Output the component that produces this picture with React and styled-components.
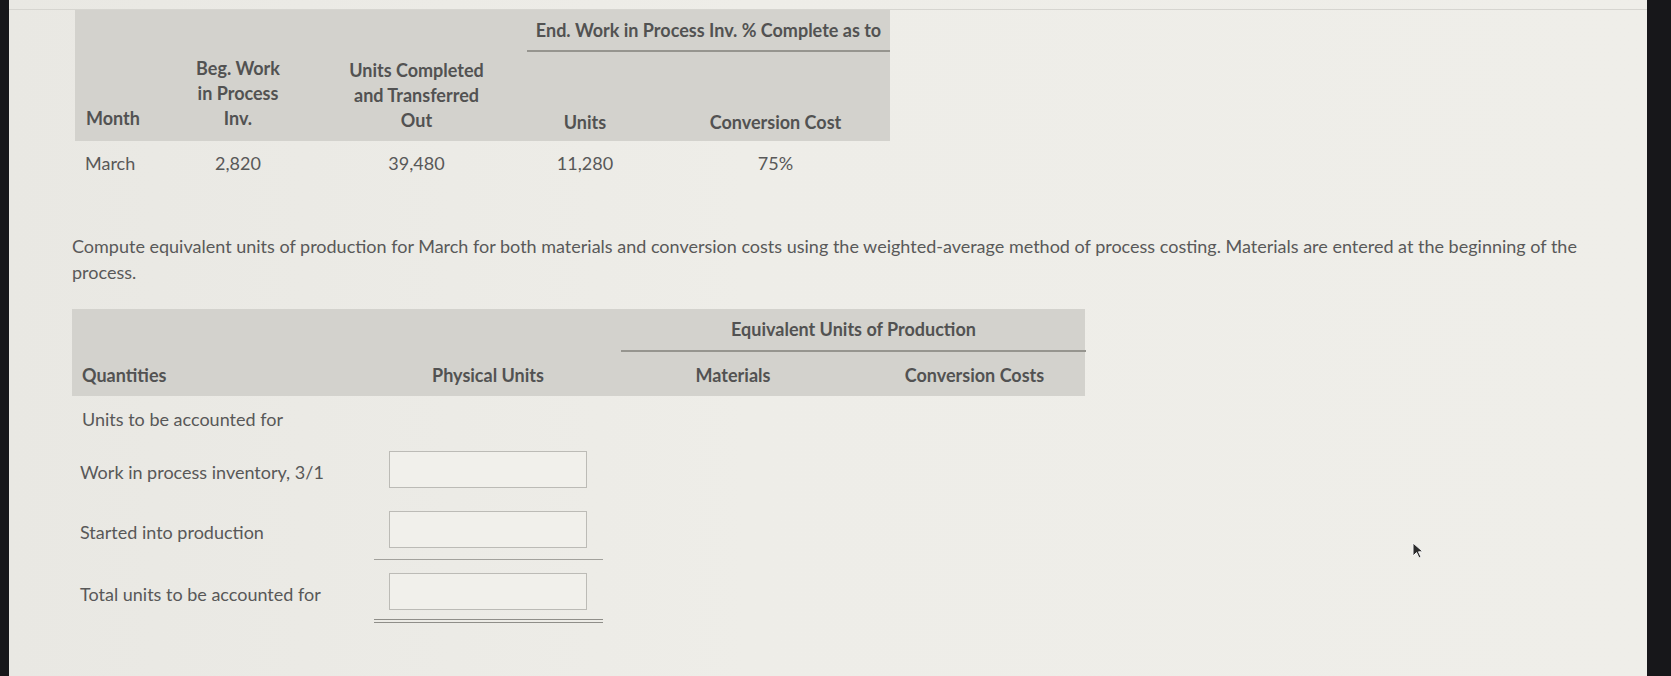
import styled, { createGlobalStyle } from 'styled-components';

const GlobalStyle = createGlobalStyle`
  html, body {
    margin: 0;
    padding: 0;
    background: #17171a;
  }
  body {
    font-family: Lato, "Open Sans", "Liberation Sans", sans-serif;
    color: #565656;
  }
`;

const Screen = styled.div`
  position: relative;
  margin-left: 9px;
  width: 1638px;
  height: 676px;
  background: linear-gradient(90deg, #e9e8e3 0%, #eeede8 45%, #efeee9 100%);
  overflow: hidden;
`;

const TopRule = styled.div`
  height: 9px;
  border-bottom: 1px solid #d6d5d0;
`;

const Content = styled.div`
  padding-left: 62px;
`;

const Grid = styled.div`
  display: grid;
  grid-template-columns: ${p => p.$cols};
  width: ${p => p.$width}px;
  margin-left: ${p => p.$offset || 0}px;
`;

const HeadGrid = styled(Grid)`
  grid-template-rows: ${p => p.$rows};
  background: #d3d2cd;
  font-weight: 700;
  font-size: 18px;
  line-height: 25px;
  color: #525252;
`;

const HCell = styled.div`
  grid-column: ${p => p.$col};
  grid-row: ${p => p.$row};
  align-self: end;
  text-align: ${p => (p.$left ? 'left' : 'center')};
  padding-left: ${p => p.$pl || 0}px;
  padding-bottom: ${p => p.$pb || 6}px;
`;

const SpanCell = styled.div`
  grid-column: ${p => p.$col};
  grid-row: 1;
  display: flex;
  align-items: center;
  justify-content: center;
  border-bottom: 2px solid #96958f;
`;

const DataRow = styled(Grid)`
  height: 43px;
  align-items: center;
  font-size: 18px;
  color: #585858;
`;

const DCell = styled.div`
  text-align: ${p => (p.$left ? 'left' : 'center')};
  padding-left: ${p => p.$pl || 0}px;
`;

const Prompt = styled.p`
  margin: 49px 0 0 1px;
  width: 1545px;
  font-size: 18px;
  line-height: 26px;
  color: #595959;
`;

const QTable = styled.div`
  margin-top: 24px;
`;

const BodyRow = styled(Grid)`
  height: ${p => p.$h}px;
  font-size: 18px;
  color: #585858;
`;

const Label = styled.div`
  display: flex;
  align-items: ${p => (p.$top ? 'center' : 'flex-start')};
  padding-left: ${p => p.$pl || 8}px;
  padding-top: ${p => p.$pt || 0}px;
`;

const ValueCell = styled.div`
  display: flex;
  flex-direction: column;
  align-items: center;
  padding-top: 9px;
`;

const AmountInput = styled.input`
  box-sizing: border-box;
  width: 198px;
  height: 37px;
  border: 1px solid #bcbbb6;
  background: #f1f0eb;
  outline: none;
`;

const Underline = styled.div`
  width: 229px;
  margin-top: ${p => p.$gap}px;
  border-bottom: ${p => (p.$double ? '4px double #8f8e89' : '1px solid #a3a29d')};
`;

const Cursor = styled.svg`
  position: absolute;
  left: 1402px;
  top: 542px;
`;

const rows = [
  { label: 'Work in process inventory, 3/1', h: 60 },
  { label: 'Started into production', h: 62, line: 'single' },
  { label: 'Total units to be accounted for', h: 70, line: 'double' },
];

export default function App() {
  return (
    <>
      <GlobalStyle />
      <Screen>
        <TopRule />
        <Content>
          <HeadGrid $cols="95px 136px 221px 116px 247px" $rows="42px 89px" $width={815} $offset={4}>
            <HCell $col="1" $row="1 / 3" $left $pl={11} $pb={10}>Month</HCell>
            <HCell $col="2" $row="1 / 3" $pb={10}>Beg. Work<br />in Process<br />Inv.</HCell>
            <HCell $col="3" $row="1 / 3" $pb={8}>Units Completed<br />and Transferred<br />Out</HCell>
            <SpanCell $col="4 / 6">End. Work in Process Inv. % Complete as to</SpanCell>
            <HCell $col="4" $row="2" $pb={6}>Units</HCell>
            <HCell $col="5" $row="2" $pl={18} $pb={6}>Conversion Cost</HCell>
          </HeadGrid>
          <DataRow $cols="95px 136px 221px 116px 247px" $width={815} $offset={4}>
            <DCell $left $pl={10}>March</DCell>
            <DCell>2,820</DCell>
            <DCell>39,480</DCell>
            <DCell>11,280</DCell>
            <DCell $pl={18}>75%</DCell>
          </DataRow>

          <Prompt>
            Compute equivalent units of production for March for both materials and conversion costs using the
            weighted-average method of process costing. Materials are entered at the beginning of the process.
          </Prompt>

          <QTable>
            <HeadGrid $cols="283px 266px 224px 241px" $rows="43px 44px" $width={1013} $offset={1}>
              <HCell $col="1" $row="1 / 3" $left $pl={10} $pb={8}>Quantities</HCell>
              <HCell $col="2" $row="1 / 3" $pb={8}>Physical Units</HCell>
              <SpanCell $col="3 / 5">Equivalent Units of Production</SpanCell>
              <HCell $col="3" $row="2" $pb={8}>Materials</HCell>
              <HCell $col="4" $row="2" $pl={18} $pb={8}>Conversion Costs</HCell>
            </HeadGrid>
            <BodyRow $cols="283px 266px 224px 241px" $width={1013} $offset={1} $h={46}>
              <Label $top $pl={10}>Units to be accounted for</Label>
            </BodyRow>
            {rows.map(r => (
              <BodyRow key={r.label} $cols="283px 266px 224px 241px" $width={1013} $offset={1} $h={r.h}>
                <Label $pt={19}>{r.label}</Label>
                <ValueCell>
                  <AmountInput aria-label={r.label} />
                  {r.line === 'single' && <Underline $gap={11} />}
                  {r.line === 'double' && <Underline $gap={9} $double />}
                </ValueCell>
              </BodyRow>
            ))}
          </QTable>
        </Content>
        <Cursor width="14" height="18" viewBox="0 0 14 18">
          <path d="M2 1 L2 14 L5.5 10.5 L8 16 L10 15 L7.5 9.8 L12 9.8 Z" fill="#2b2b2b" stroke="#f4f4f4" strokeWidth="1" />
        </Cursor>
      </Screen>
    </>
  );
}
